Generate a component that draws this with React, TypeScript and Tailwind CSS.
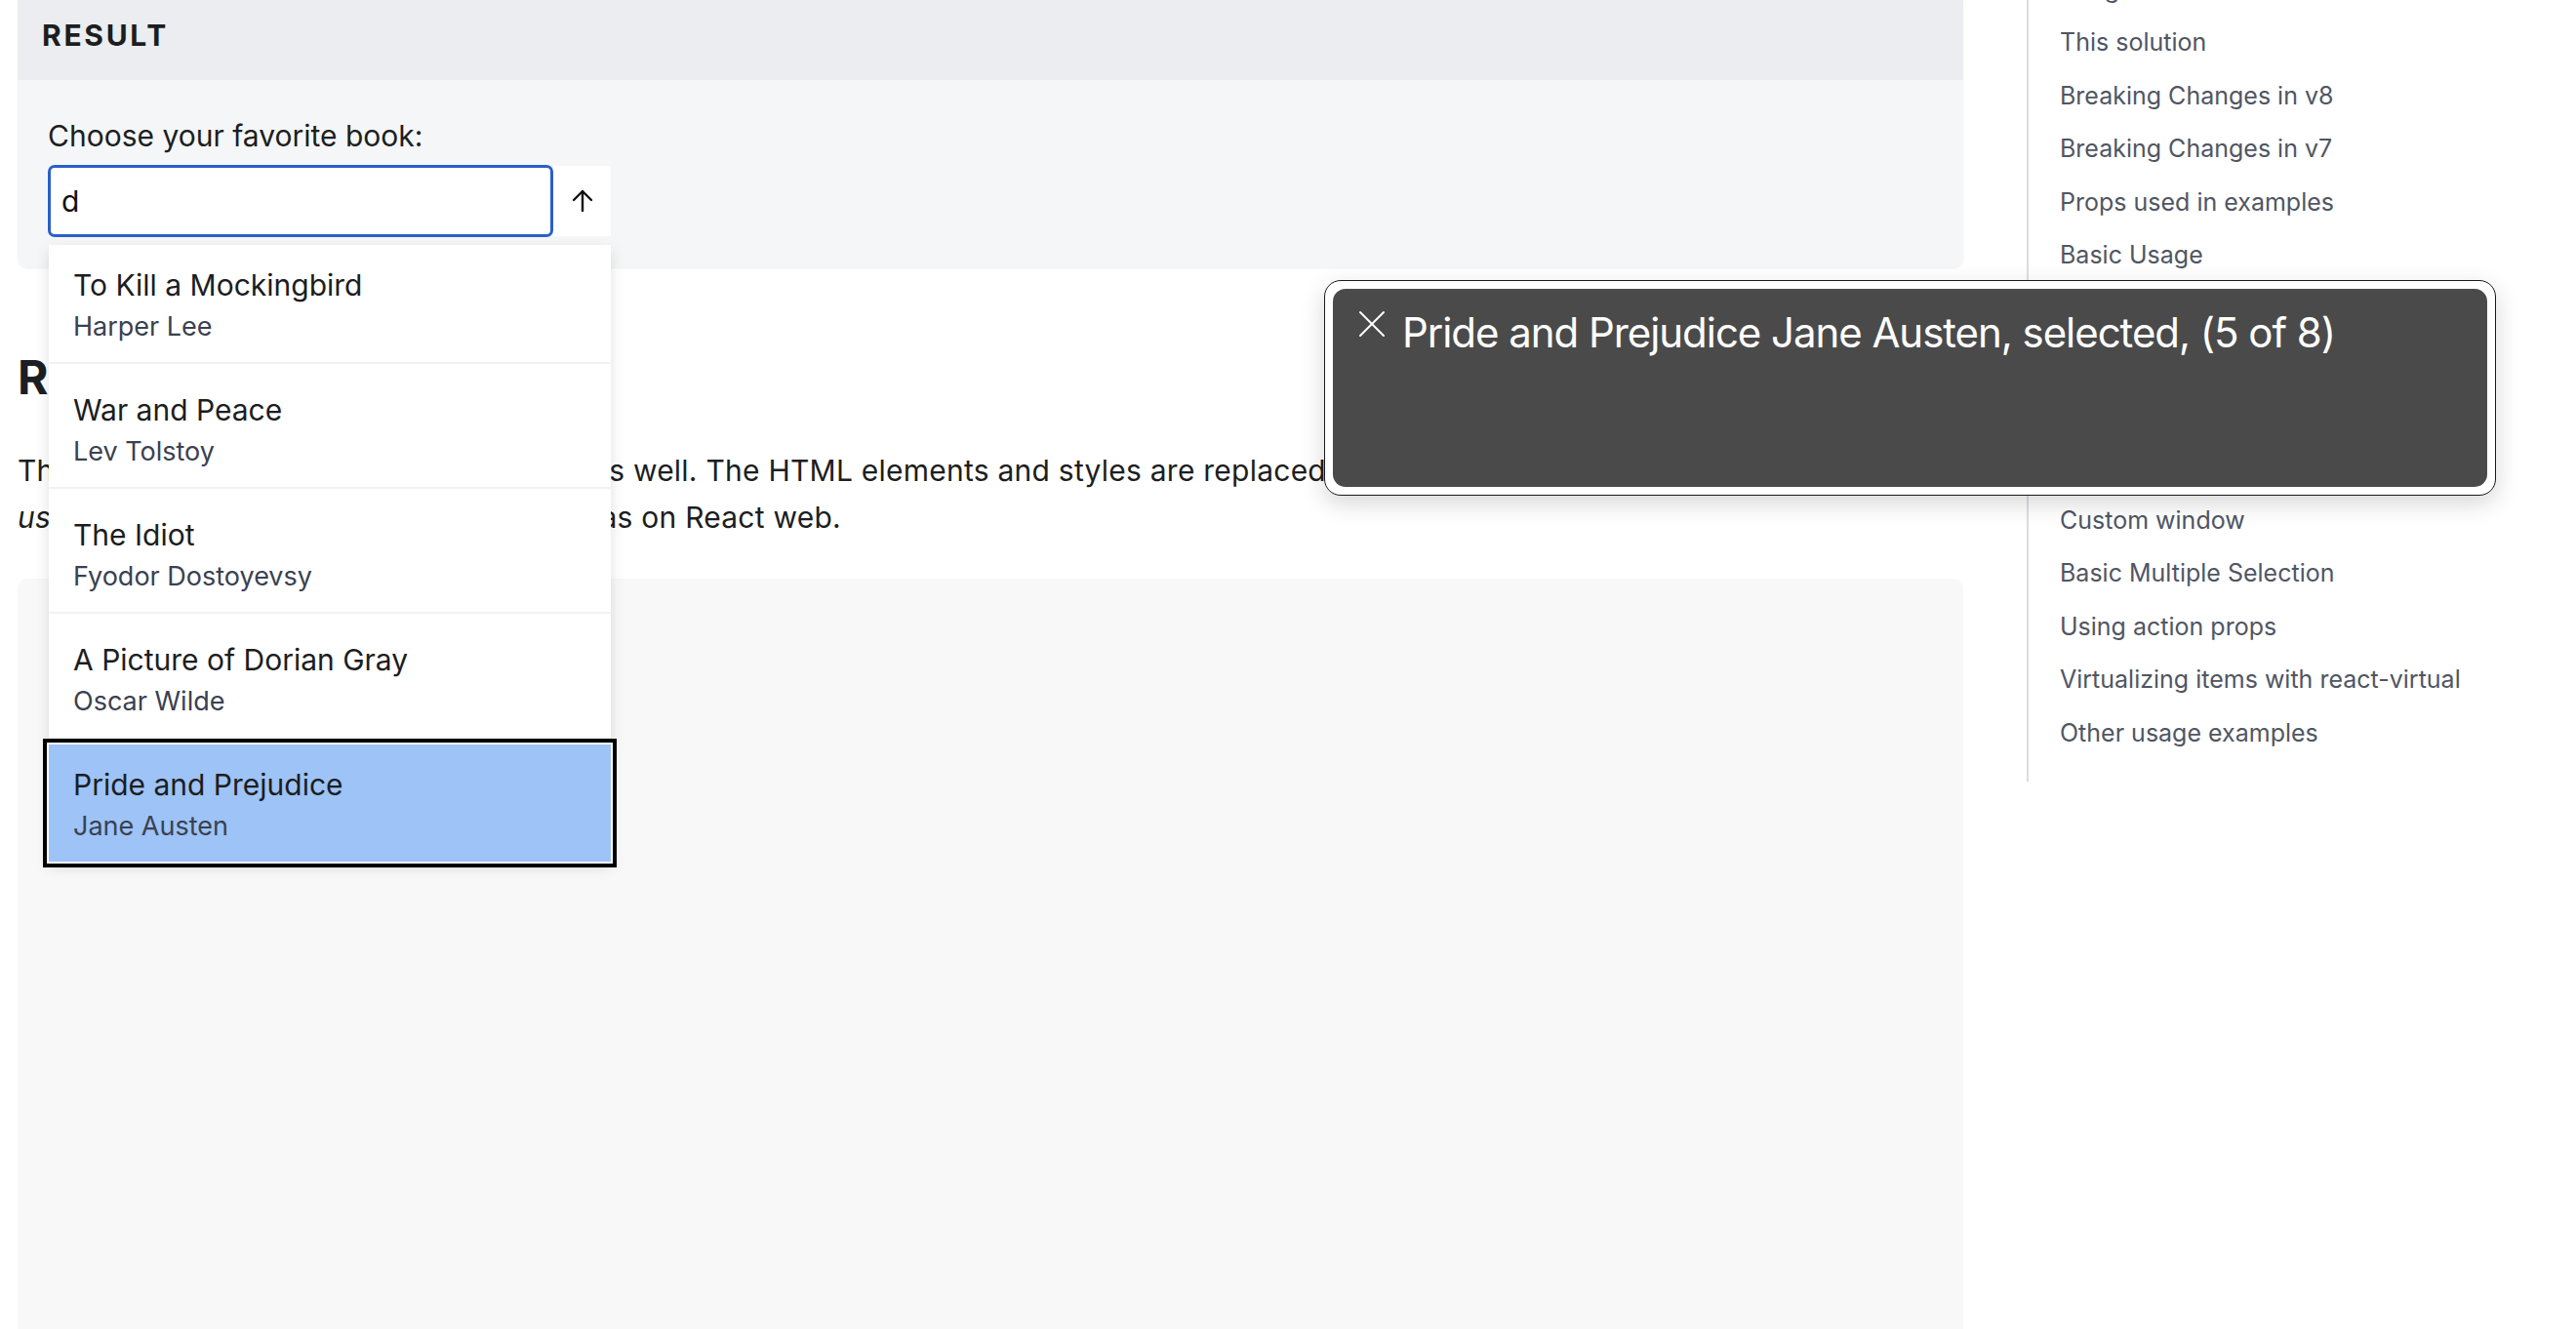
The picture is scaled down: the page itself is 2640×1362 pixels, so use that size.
import React from "react";

const books = [
  { title: "To Kill a Mockingbird", author: "Harper Lee" },
  { title: "War and Peace", author: "Lev Tolstoy" },
  { title: "The Idiot", author: "Fyodor Dostoyevsy" },
  { title: "A Picture of Dorian Gray", author: "Oscar Wilde" },
  { title: "Pride and Prejudice", author: "Jane Austen" },
];

const toc = [
  "Usage",
  "This solution",
  "Breaking Changes in v8",
  "Breaking Changes in v7",
  "Props used in examples",
  "Basic Usage",
  "Controlling state",
  "Material UI",
  "React Native",
  "Custom item rendering",
  "Custom window",
  "Basic Multiple Selection",
  "Using action props",
  "Virtualizing items with react-virtual",
  "Other usage examples",
];

function ArrowUpIcon() {
  return (
    <svg width="22" height="24" viewBox="0 0 22 24" fill="none" stroke="#111" strokeWidth="2.4" strokeLinecap="round" strokeLinejoin="round">
      <path d="M11 22V2" />
      <path d="M2 11l9-9 9 9" />
    </svg>
  );
}

function CloseIcon() {
  return (
    <svg width="28" height="28" viewBox="0 0 28 28" fill="none" stroke="#fff" strokeWidth="2" strokeLinecap="round">
      <path d="M2 2l24 24" />
      <path d="M26 2L2 26" />
    </svg>
  );
}

function BookList() {
  return (
    <ul className="absolute left-[1px] top-[calc(100%+8px)] w-[576px] bg-white shadow-[0_6px_14px_rgba(0,0,0,0.12)]">
      {books.map((b, i) => {
        const last = i === books.length - 1;
        return (
          <li
            key={b.title}
            className={
              last
                ? "h-[120px] pl-[25px] pt-[21px] bg-[#9dc3f7] shadow-[0_0_0_2px_#fff,0_0_0_6px_#000]"
                : "h-[122px] mb-[6px] pl-[25px] pt-[21px] border-b-2 border-[#f1f2f4]"
            }
          >
            <div className="text-[30px] leading-[40px] text-[#1c1d20]">{b.title}</div>
            <div className="mt-[5px] text-[27px] leading-[36px] text-[#3a4150]">{b.author}</div>
          </li>
        );
      })}
    </ul>
  );
}

export default function App() {
  return (
    <div
      className="relative w-[2640px] h-[1362px] overflow-hidden bg-white"
      style={{ fontFamily: "Inter, 'Noto Sans', sans-serif" }}
    >
      <div className="flex">
        {/* main column */}
        <div className="ml-[18px] w-[1994px] shrink-0">
          <div className="rounded-b-[10px] shadow-[0_1px_2px_rgba(0,0,0,0.07)]">
            <div className="h-[82px] bg-[#ebedf0] pl-[25px] pt-[18px]">
              <span className="text-[30px] leading-[36px] font-bold tracking-[0.09em] text-[#1c1e21]">RESULT</span>
            </div>
            <div className="bg-[#f5f6f8] rounded-b-[10px] pl-[31px] pt-[39px] pb-[31px]">
              <label className="block text-[30px] leading-[36px] text-[#1c1e21]">Choose your favorite book:</label>
              <div className="relative mt-[12px] flex w-[577px]">
                <div className="h-[74px] w-[518px] rounded-[7px] border-[3px] border-[#2b5fc9] bg-white pl-[11px] flex items-center">
                  <span className="text-[30px] text-[#111]">d</span>
                </div>
                <div className="mt-[1px] h-[72px] w-[59px] bg-white flex items-center justify-center">
                  <ArrowUpIcon />
                </div>
                <BookList />
              </div>
            </div>
          </div>

          <h2 className="mt-[84px] text-[48px] leading-[58px] font-bold text-[#1c1e21]">React Native</h2>
          <p className="mt-[42px] text-[30px] leading-[48px] tracking-[0.008em] text-[#1c1e21]">
            <span className="whitespace-nowrap">
              The hook can be used with React Native as well. The HTML elements and styles are replaced with React Native equivalents, but the
            </span>
            <br />
            <em>useCombobox</em> usage is exactly the same as on React web.
          </p>
          <div className="mt-[39px] h-[900px] rounded-[10px] bg-[#f8f8f8]" />
        </div>

        {/* table of contents */}
        <nav className="ml-[65px] -mt-[38px] self-start border-l-2 border-[#dcdde2] pl-[32px] pb-[23px]">
          <ul>
            {toc.map((t) => (
              <li key={t} className="text-[25px] leading-[54.4px] text-[#505663] whitespace-nowrap">
                {t}
              </li>
            ))}
          </ul>
        </nav>
      </div>

      {/* live region toast */}
      <div className="absolute left-[1357px] top-[287px] w-[1201px] h-[221px] rounded-[17px] border-[1.5px] border-[#1a1a1a] bg-white p-[8px] shadow-[0_8px_24px_rgba(0,0,0,0.16)]">
        <div className="relative h-full rounded-[13px] bg-[#4a4a4a]">
          <div className="absolute left-[26px] top-[22px]">
            <CloseIcon />
          </div>
          <div className="pl-[71px] pt-[19px] text-[42px] leading-[52px] tracking-[-0.025em] text-white">
            Pride and Prejudice Jane Austen, selected, (5 of 8)
          </div>
        </div>
      </div>
    </div>
  );
}
